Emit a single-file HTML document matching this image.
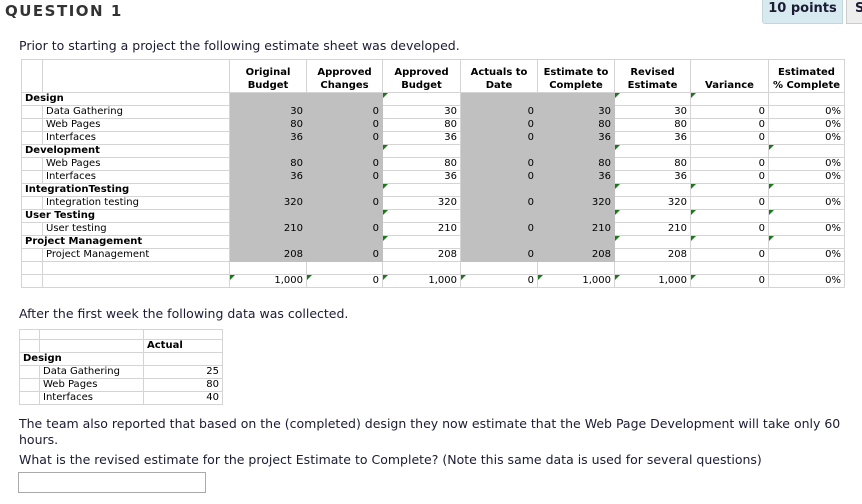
<!DOCTYPE html>
<html><head><meta charset="utf-8"><style>
*{margin:0;padding:0;box-sizing:border-box}
body{width:862px;height:504px;background:#fff;position:relative;overflow:hidden;font-family:"DejaVu Sans","Liberation Sans",sans-serif;color:#1b1b33}
.abs{position:absolute}
.t{font-size:12.5px;white-space:nowrap}
table{border-collapse:collapse;table-layout:fixed;position:absolute;font-size:10px;color:#000}
td{border:1px solid #d4d4d4;height:13px;padding:0 3px;line-height:12px;white-space:nowrap;overflow:hidden;position:relative}
td.n{text-align:right}
td.g{background:#c0c0c0;border-color:#c0c0c0}
th{font-weight:bold;border:1px solid #d4d4d4;text-align:center;vertical-align:bottom;font-size:10px;line-height:13px;padding-bottom:0}
.b{font-weight:bold}
.tri{position:absolute;left:0;top:0;width:0;height:0;border-top:5px solid #1a7a1a;border-right:5px solid transparent}
tr.tot td{border-top:1px solid #000}
</style></head><body>
<div class="abs" style="left:5px;top:2px;font-size:15px;font-weight:bold;letter-spacing:1.5px;color:#333">QUESTION 1</div>
<div class="abs" style="left:762px;top:-2px;width:81px;height:26px;background:#d6eaf0;border:1px solid #c2d6dc;border-radius:0 0 0 3px;font-size:13px;font-weight:bold;text-align:center;line-height:20px;color:#1b1b33">10 points</div>
<div class="abs" style="left:846px;top:-2px;width:30px;height:26px;background:#eee;border:1px solid #ccc;font-size:13px;font-weight:bold;padding-left:8px;line-height:20px">S</div>
<div class="abs t" style="left:19px;top:38px">Prior to starting a project the following estimate sheet was developed.</div>

<table style="left:21px;top:59px;width:824px">
<colgroup><col style="width:21px"><col style="width:187px"><col style="width:77px"><col style="width:76px"><col style="width:78px"><col style="width:77px"><col style="width:77px"><col style="width:76px"><col style="width:78px"><col style="width:76px"></colgroup>
<tr style="height:33px"><th></th><th></th><th>Original<br>Budget</th><th>Approved<br>Changes</th><th>Approved<br>Budget</th><th>Actuals to<br>Date</th><th>Estimate to<br>Complete</th><th>Revised<br>Estimate</th><th>Variance</th><th>Estimated<br>% Complete</th></tr>
<tr><td colspan="2" class="b">Design</td><td class="g"></td><td class="g"></td><td><i class="tri"></i></td><td class="g"></td><td class="g"></td><td><i class="tri"></i></td><td><i class="tri"></i></td><td></td></tr>
<tr><td></td><td>Data Gathering</td><td class="g n">30</td><td class="g n">0</td><td class="n">30</td><td class="g n">0</td><td class="g n">30</td><td class="n">30</td><td class="n">0</td><td class="n">0%</td></tr>
<tr><td></td><td>Web Pages</td><td class="g n">80</td><td class="g n">0</td><td class="n">80</td><td class="g n">0</td><td class="g n">80</td><td class="n">80</td><td class="n">0</td><td class="n">0%</td></tr>
<tr><td></td><td>Interfaces</td><td class="g n">36</td><td class="g n">0</td><td class="n">36</td><td class="g n">0</td><td class="g n">36</td><td class="n">36</td><td class="n">0</td><td class="n">0%</td></tr>
<tr><td colspan="2" class="b">Development</td><td class="g"></td><td class="g"></td><td><i class="tri"></i></td><td class="g"></td><td class="g"></td><td><i class="tri"></i></td><td></td><td><i class="tri"></i></td></tr>
<tr><td></td><td>Web Pages</td><td class="g n">80</td><td class="g n">0</td><td class="n">80</td><td class="g n">0</td><td class="g n">80</td><td class="n">80</td><td class="n">0</td><td class="n">0%</td></tr>
<tr><td></td><td>Interfaces</td><td class="g n">36</td><td class="g n">0</td><td class="n">36</td><td class="g n">0</td><td class="g n">36</td><td class="n">36</td><td class="n">0</td><td class="n">0%</td></tr>
<tr><td colspan="2" class="b">IntegrationTesting</td><td class="g"></td><td class="g"></td><td><i class="tri"></i></td><td class="g"></td><td class="g"></td><td><i class="tri"></i></td><td><i class="tri"></i></td><td><i class="tri"></i></td></tr>
<tr><td></td><td>Integration testing</td><td class="g n">320</td><td class="g n">0</td><td class="n">320</td><td class="g n">0</td><td class="g n">320</td><td class="n">320</td><td class="n">0</td><td class="n">0%</td></tr>
<tr><td colspan="2" class="b">User Testing</td><td class="g"></td><td class="g"></td><td><i class="tri"></i></td><td class="g"></td><td class="g"></td><td><i class="tri"></i></td><td><i class="tri"></i></td><td><i class="tri"></i></td></tr>
<tr><td></td><td>User testing</td><td class="g n">210</td><td class="g n">0</td><td class="n">210</td><td class="g n">0</td><td class="g n">210</td><td class="n">210</td><td class="n">0</td><td class="n">0%</td></tr>
<tr><td colspan="2" class="b">Project Management</td><td class="g"></td><td class="g"></td><td><i class="tri"></i></td><td class="g"></td><td class="g"></td><td><i class="tri"></i></td><td><i class="tri"></i></td><td><i class="tri"></i></td></tr>
<tr><td></td><td>Project Management</td><td class="g n">208</td><td class="g n">0</td><td class="n">208</td><td class="g n">0</td><td class="g n">208</td><td class="n">208</td><td class="n">0</td><td class="n">0%</td></tr>
<tr><td></td><td></td><td></td><td></td><td></td><td></td><td></td><td></td><td></td><td></td></tr>
<tr class="tot"><td></td><td></td><td class="n"><i class="tri"></i>1,000</td><td class="n"><i class="tri"></i>0</td><td class="n"><i class="tri"></i>1,000</td><td class="n"><i class="tri"></i>0</td><td class="n"><i class="tri"></i>1,000</td><td class="n"><i class="tri"></i>1,000</td><td class="n"><i class="tri"></i>0</td><td class="n">0%</td></tr>
</table>

<div class="abs t" style="left:19px;top:306px">After the first week the following data was collected.</div>
<table style="left:19px;top:329px;width:203px">
<colgroup><col style="width:20px"><col style="width:104px"><col style="width:79px"></colgroup>
<tr style="height:10px"><td style="height:10px"></td><td style="height:10px"></td><td style="height:10px"></td></tr>
<tr><td></td><td></td><td class="b">Actual</td></tr>
<tr style="height:12px"><td colspan="2" class="b" style="height:12px">Design</td><td style="height:12px"></td></tr>
<tr style="height:12px"><td style="height:12px"></td><td style="height:12px">Data Gathering</td><td class="n" style="height:12px">25</td></tr>
<tr style="height:12px"><td style="height:12px"></td><td style="height:12px">Web Pages</td><td class="n" style="height:12px">80</td></tr>
<tr style="height:12px"><td style="height:12px"></td><td style="height:12px">Interfaces</td><td class="n" style="height:12px">40</td></tr>
</table>

<div class="abs t" style="left:19px;top:416px">The team also reported that based on the (completed) design they now estimate that the Web Page Development will take only 60</div>
<div class="abs t" style="left:19px;top:432px">hours.</div>
<div class="abs t" style="left:19px;top:452px">What is the revised estimate for the project Estimate to Complete? (Note this same data is used for several questions)</div>
<div class="abs" style="left:18px;top:472px;width:188px;height:21px;border:1px solid #aaa;background:#fff"></div>
</body></html>
